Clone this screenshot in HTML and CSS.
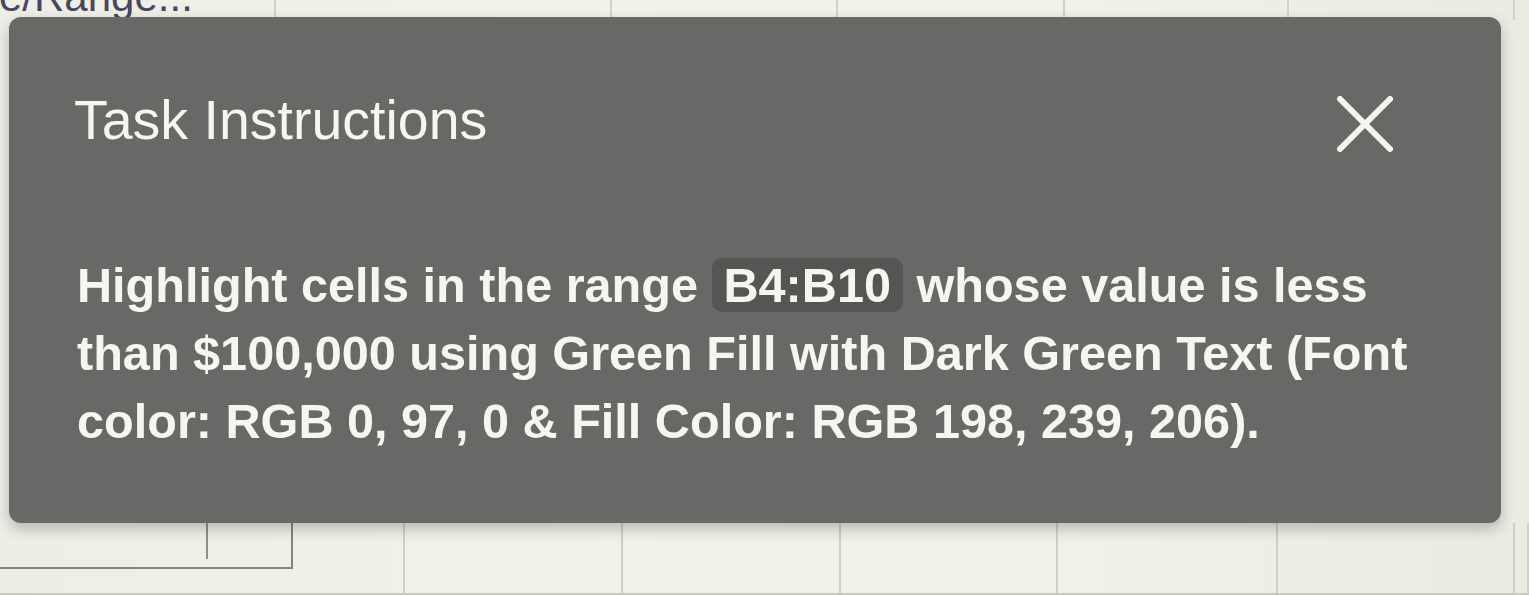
FILE: index.html
```html
<!DOCTYPE html>
<html lang="en">
<head>
<meta charset="utf-8">
<title>Task Instructions</title>
<link rel="stylesheet" href="styles.css">
</head>
<body>
<div class="sheet">
  <div class="row row-top">
    <div class="cell cell-name"><span class="range-text">e/Range...</span></div>
    <div class="cell w336"></div>
    <div class="cell w226"></div>
    <div class="cell w227"></div>
    <div class="cell w224"></div>
    <div class="cell w226"></div>
    <div class="cell cell-rest"></div>
  </div>

  <div class="row row-bottom">
    <div class="box"><div class="box-inner"></div></div>
    <div class="bcell w112"></div>
    <div class="bcell w218"></div>
    <div class="bcell w218"></div>
    <div class="bcell w217"></div>
    <div class="bcell w220"></div>
    <div class="bcell w18"></div>
    <div class="bcell cell-rest"></div>
  </div>

  <div class="modal" role="dialog" aria-labelledby="modal-title">
    <div class="modal-header">
      <h2 class="modal-title" id="modal-title">Task Instructions</h2>
      <button class="close-btn" aria-label="Close">
        <svg width="56" height="56" viewBox="0 0 56 56" aria-hidden="true">
          <path d="M3 3 L53 53 M53 3 L3 53" stroke="#f6f6f1" stroke-width="6" stroke-linecap="round" fill="none"/>
        </svg>
      </button>
    </div>
    <p class="modal-body">Highlight cells in the range <span class="range-chip">B4:B10</span> whose value is less than $100,000 using Green Fill with Dark Green Text (Font color: RGB 0, 97, 0 &amp; Fill Color: RGB 198, 239, 206).</p>
  </div>
</div>
</body>
</html>
```

FILE: styles.css
```css
* {
  box-sizing: border-box;
}

html, body {
  margin: 0;
  padding: 0;
}

body {
  background: #f0efe8;
  font-family: "Liberation Sans", Arial, Helvetica, sans-serif;
}

.sheet {
  position: relative;
  width: 1529px;
  height: 595px;
  overflow: hidden;
  display: flex;
  flex-direction: column;
  justify-content: space-between;
  background: linear-gradient(90deg, #eeede6 0%, #f3f2ea 40%, #f1f1e9 70%, #ecebe3 100%);
}

.row {
  display: flex;
  flex-shrink: 0;
}

.row-top {
  height: 20px;
}

.cell {
  height: 100%;
  border-right: 2px solid #d2d1ca;
  flex-shrink: 0;
}

.cell-name {
  width: 276px;
}

.range-text {
  display: block;
  margin-top: -24px;
  margin-left: -1px;
  font-size: 42px;
  line-height: 42px;
  color: #4a4662;
  white-space: nowrap;
}

.w336 { width: 336px; }
.w226 { width: 226px; }
.w227 { width: 227px; }
.w224 { width: 224px; }
.w112 { width: 112px; }
.w218 { width: 218px; }
.w217 { width: 217px; }
.w220 { width: 220px; }
.w18 { width: 237px; }

.cell-rest {
  flex: 1;
  border-right: none;
}

.row-bottom {
  height: 72px;
  align-items: flex-start;
  border-bottom: 2px solid #cbcac2;
}

.box {
  width: 293px;
  height: 46px;
  border-right: 2px solid #85857f;
  border-bottom: 2px solid #85857f;
  flex-shrink: 0;
}

.box-inner {
  width: 208px;
  height: 36px;
  border-right: 2px solid #8f8f89;
}

.bcell {
  height: 70px;
  border-right: 2px solid #d0cfc7;
  flex-shrink: 0;
}

.modal {
  position: absolute;
  left: 9px;
  top: 17px;
  width: 1492px;
  height: 506px;
  background: #686966;
  border-radius: 12px;
  box-shadow: 0 6px 14px rgba(40, 40, 36, 0.28);
  padding: 72px 40px 0 65px;
  color: #f6f6f1;
}

.modal-header {
  display: flex;
  justify-content: space-between;
  align-items: flex-start;
}

.modal-title {
  margin: 0;
  font-size: 55.5px;
  font-weight: normal;
  line-height: 62px;
}

.close-btn {
  margin: 7px 68px 0 0;
  padding: 0;
  border: none;
  background: none;
  width: 56px;
  height: 56px;
  cursor: pointer;
}

.close-btn svg {
  display: block;
}

.modal-body {
  margin: 99px 0 0 3px;
  max-width: 1365px;
  font-size: 48.6px;
  font-weight: bold;
  line-height: 68px;
}

.range-chip {
  background: #555653;
  border-radius: 10px;
  padding: 0 12px;
}
```
